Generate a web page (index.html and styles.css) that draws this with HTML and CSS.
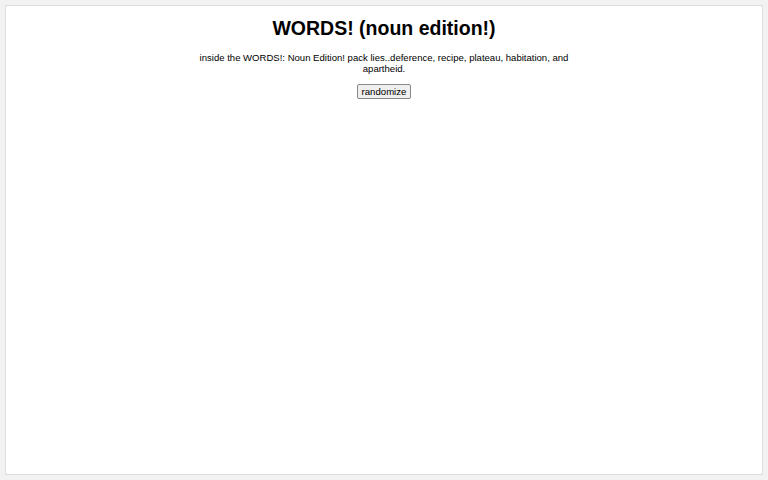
FILE: index.html
```html
<!DOCTYPE html>
<html>
<head>
<meta charset="utf-8">
<link rel="stylesheet" href="styles.css">
</head>
<body>
<div class="frame">
  <h1 class="title">WORDS! (noun edition!)</h1>
  <p class="desc">inside the WORDS!: Noun Edition! pack lies..deference, recipe, plateau, habitation, and apartheid.</p>
  <button class="btn">randomize</button>
</div>
</body>
</html>
```
FILE: styles.css
```css
html, body {
  margin: 0;
  padding: 0;
  height: 100%;
}
body {
  background: #f2f2f2;
  padding: 5px;
  box-sizing: border-box;
  font-family: "Liberation Sans", Arial, sans-serif;
}
.frame {
  height: 100%;
  box-sizing: border-box;
  background: #fff;
  border: 1px solid #dcdcdc;
  display: flex;
  flex-direction: column;
  align-items: center;
  padding-top: 10px;
}
.title {
  margin: 0;
  font-size: 19.5px;
  line-height: 24px;
  font-weight: bold;
  color: #000;
}
.desc {
  margin: 12px 0 0 0;
  width: 374px;
  text-align: center;
  font-size: 9.55px;
  line-height: 11px;
  color: #000;
}
.btn {
  margin-top: 10px;
  font-family: "Liberation Sans", Arial, sans-serif;
  font-size: 9.6px;
  padding: 1px 4px;
  background: #efefef;
  border: 1px solid #888;
  border-radius: 2px;
  color: #000;
}
```
